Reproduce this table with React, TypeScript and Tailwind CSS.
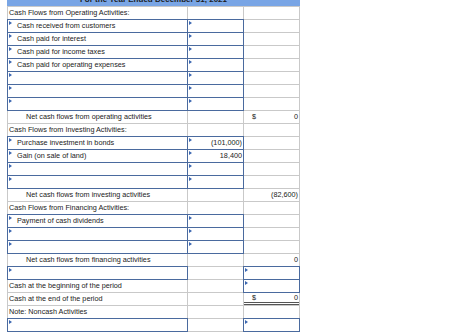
import type { ReactNode } from "react";

type Val = { input?: boolean; value?: string; dollar?: boolean; total?: boolean };

type Row = {
  label?: string;
  indent?: 0 | 1 | 2;
  in1?: boolean;
  c2?: Val;
  c3?: Val;
};

const rows: Row[] = [
  { label: "Cash Flows from Operating Activities:" },
  { label: "Cash received from customers", indent: 1, in1: true, c2: { input: true } },
  { label: "Cash paid for interest", indent: 1, in1: true, c2: { input: true } },
  { label: "Cash paid for income taxes", indent: 1, in1: true, c2: { input: true } },
  { label: "Cash paid for operating expenses", indent: 1, in1: true, c2: { input: true } },
  { in1: true, c2: { input: true } },
  { in1: true, c2: { input: true } },
  { in1: true, c2: { input: true } },
  { label: "Net cash flows from operating activities", indent: 2, c3: { value: "0", dollar: true } },
  { label: "Cash Flows from Investing Activities:" },
  { label: "Purchase investment in bonds", indent: 1, in1: true, c2: { input: true, value: "(101,000)" } },
  { label: "Gain (on sale of land)", indent: 1, in1: true, c2: { input: true, value: "18,400" } },
  { in1: true, c2: { input: true } },
  { in1: true, c2: { input: true } },
  { label: "Net cash flows from investing activities", indent: 2, c3: { value: "(82,600)" } },
  { label: "Cash Flows from Financing Activities:" },
  { label: "Payment of cash dividends", indent: 1, in1: true, c2: { input: true } },
  { in1: true, c2: { input: true } },
  { in1: true, c2: { input: true } },
  { label: "Net cash flows from financing activities", indent: 2, c3: { value: "0" } },
  { in1: true, c3: { input: true } },
  { label: "Cash at the beginning of the period", c3: { input: true } },
  { label: "Cash at the end of the period", c3: { value: "0", dollar: true, total: true } },
  { label: "Note: Noncash Activities" },
  { in1: true, c3: { input: true } },
];

const indentClass = ["pl-[1px]", "pl-[9px]", "pl-[18px]"];

function Cell({ input, className = "", children }: { input?: boolean; className?: string; children?: ReactNode }) {
  return (
    <div
      className={`relative flex items-center bg-white whitespace-nowrap overflow-visible ${
        input ? "outline outline-[#4a6a9e]" : ""
      } ${className}`}
    >
      {input && (
        <span className="absolute left-px top-px h-0 w-0 border-y-[2px] border-y-transparent border-l-[3px] border-l-[#3a66b0]" />
      )}
      {children}
    </div>
  );
}

function NumCell({ v }: { v?: Val }) {
  if (!v) return <Cell />;
  return (
    <Cell input={v.input} className={`justify-end pr-px ${v.total ? "border-b-[3px] border-double border-[#555]" : ""}`}>
      {v.dollar && <span className="absolute left-[8px] top-1/2 -translate-y-1/2">$</span>}
      {v.value && <span>{v.value}</span>}
    </Cell>
  );
}

export default function App() {
  return (
    <div className="min-h-screen bg-white" style={{ fontFamily: '"Liberation Sans", Arial, sans-serif' }}>
      <div className="ml-[7px] w-[293px] text-[7.25px] leading-none text-[#222]">
        {/* Title band, scrolled off the top */}
        <div className="h-[6px] overflow-hidden bg-[#79a5e5] text-center">
          <div className="mt-[-4px] text-[8px] font-bold leading-none text-[#1c1c1c]">
            For the Year Ended December 31, 2021
          </div>
        </div>

        <div className="grid grid-cols-[179px_55px_55px] auto-rows-[12px] gap-px bg-[#c9c9c9] p-px">
          {rows.map((r, i) => (
            <div key={i} className="contents">
              <Cell input={r.in1} className={indentClass[r.indent ?? 0]}>
                {r.label}
              </Cell>
              <NumCell v={r.c2} />
              <NumCell v={r.c3} />
            </div>
          ))}
        </div>
      </div>
    </div>
  );
}
